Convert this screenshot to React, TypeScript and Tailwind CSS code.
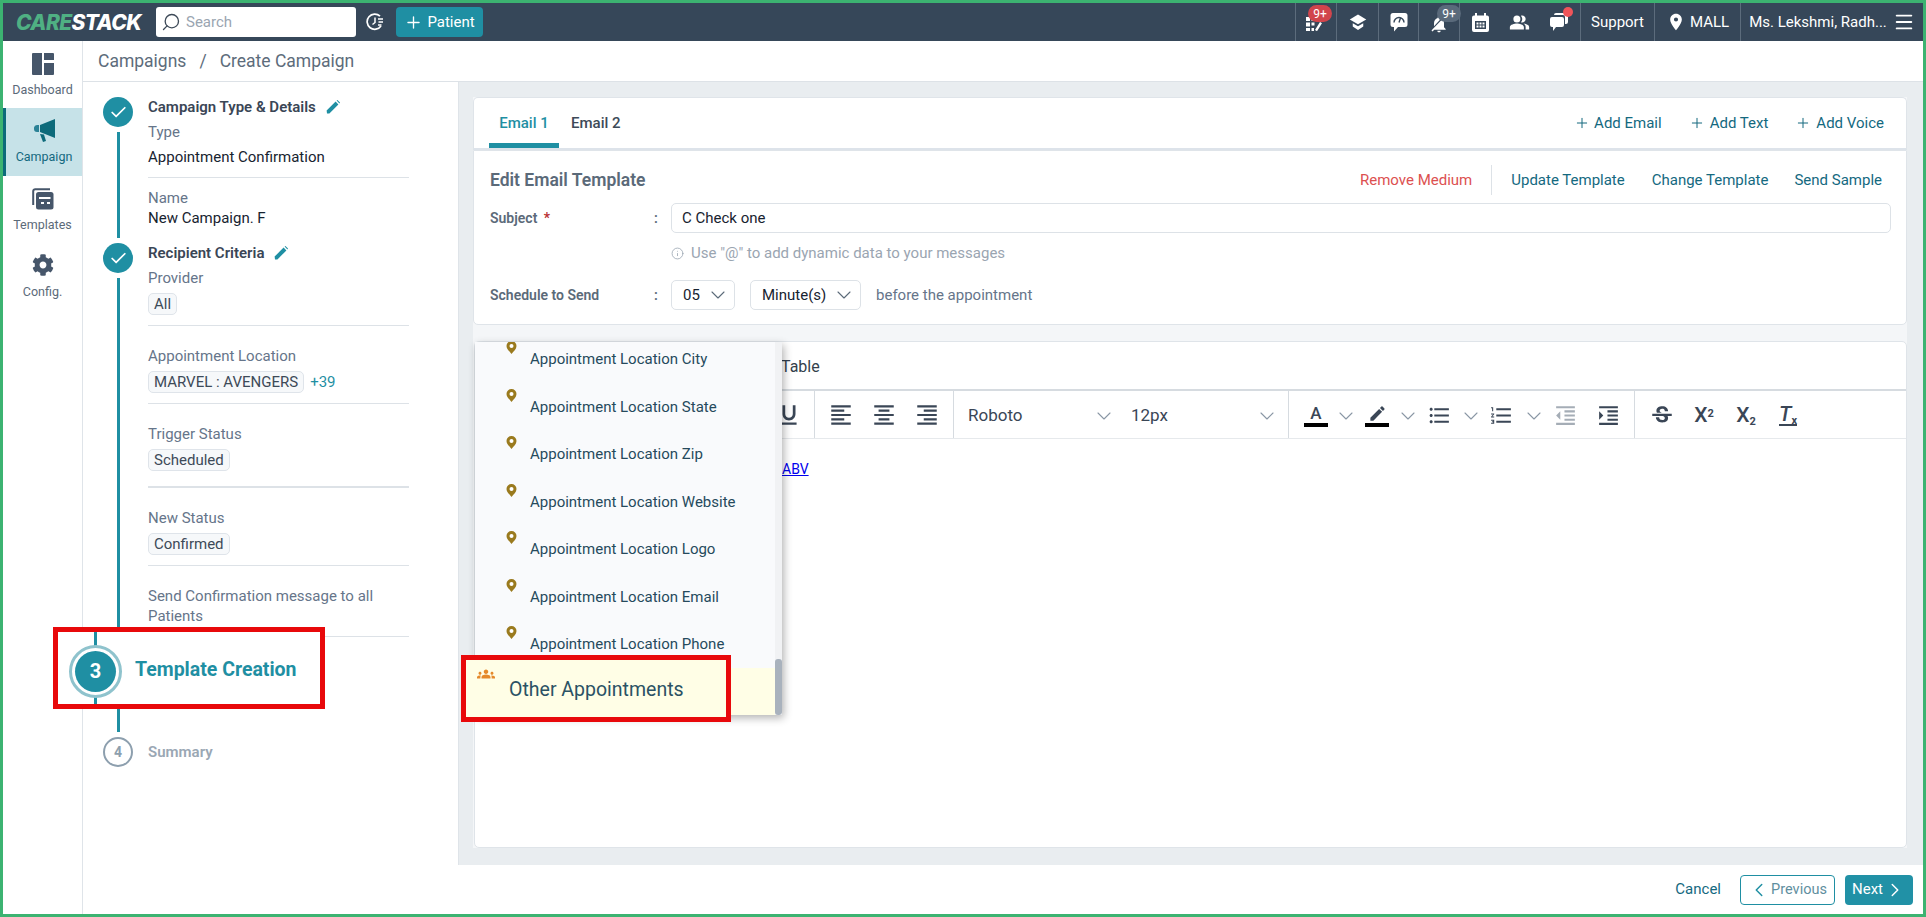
import React from "react";
import { Search, Plus, ChevronDown, ChevronLeft, ChevronRight, Check, Menu, Info } from "lucide-react";
import { FaCog } from "react-icons/fa";
import {
  MdNotificationsOff, MdPeopleAlt, MdLocationOn, MdFormatAlignLeft, MdFormatAlignCenter, MdFormatAlignRight,
  MdFormatListBulleted, MdFormatListNumbered, MdFormatIndentDecrease, MdFormatIndentIncrease, MdStrikethroughS,
  MdFormatUnderlined, MdEdit, MdGroups,
} from "react-icons/md";

const Pencil = () => (
  <svg width="14" height="14" viewBox="0 0 14 14" className="text-[#1f8fa3]">
    <path d="M1 13.5 L0.6 10.6 L9.6 1.6 L12.4 4.4 L3.4 13.4 Z" fill="currentColor" />
    <path d="M10.6 0.6 L11.4 0 L14 2.6 L13.4 3.4 Z" fill="currentColor" />
  </svg>
);

const Chip = ({ children }: { children: React.ReactNode }) => (
  <span className="inline-flex h-[22px] items-center rounded-[5px] border border-[#dfe4ea] bg-[#f6f8fa] px-[5px] text-[15px] text-[#3d4a58]">{children}</span>
);

const Label = ({ children, cls = "" }: { children: React.ReactNode; cls?: string }) => (
  <div className={`text-[15px] leading-[20px] text-[#66758a] ${cls}`}>{children}</div>
);

const Done = () => (
  <div className="flex h-[30px] w-[30px] items-center justify-center rounded-full bg-[#1f8fa3] text-white">
    <Check size={19} strokeWidth={2.2} />
  </div>
);

const TB = ({ children }: { children: React.ReactNode }) => <span className="flex w-[26px] items-center justify-center text-[#3a4656]">{children}</span>;

const Cv = ({ cls = "" }: { cls?: string }) => (
  <span className={`flex w-[15px] shrink-0 justify-center text-[#8a97a5] ${cls}`}>
    <ChevronDown size={24} strokeWidth={1.1} className="shrink-0" />
  </span>
);

const SelectCv = () => (
  <span className="flex w-[16px] shrink-0 justify-center text-[#5b6a79]">
    <ChevronDown size={24} strokeWidth={1.1} className="shrink-0" />
  </span>
);

const pins = ["City", "State", "Zip", "Website", "Logo", "Email", "Phone"];

const HeaderCell = ({ w, children }: { w: string; children: React.ReactNode }) => (
  <div className={`relative flex h-full items-center justify-center border-l border-[#5c6c7c] ${w}`}>{children}</div>
);

export default function App() {
  return (
    <div className="flex h-[917px] w-[1926px] flex-col overflow-hidden border-[3px] border-[#3cb371] bg-white font-[Roboto,sans-serif]">
      {/* top bar */}
      <header className="flex h-[38px] shrink-0 items-center bg-[#364759] text-white">
        <div className="ml-[13px] w-[127px] whitespace-nowrap font-[Inter,sans-serif] text-[21px] font-extrabold italic leading-none tracking-[-0.6px]">
          <span className="text-[#4fb083]">CARE</span><span className="text-white">STACK</span>
        </div>
        <div className="ml-[13px] flex h-[30px] w-[200px] items-center rounded-[3px] bg-white pl-[5px]">
          <Search size={20} strokeWidth={1.6} className="-scale-x-100 text-[#3d4a58]" />
          <span className="ml-[5px] text-[15px] text-[#9aa5b1]">Search</span>
        </div>
        <svg width="18" height="18" viewBox="0 0 18 18" className="ml-[10px]" fill="none" stroke="white" strokeWidth="1.7">
          <path d="M14 3.2A7.6 7.6 0 1 0 15 13" />
          <path d="M9 4.5v5l-2.5 2" strokeWidth="1.5" />
          <path d="M12 6h5M12.5 9h4.5M12 12h3.5" strokeWidth="1.4" />
        </svg>
        <div className="ml-[12px] flex h-[30px] w-[87px] items-center justify-center gap-[4px] rounded-[4px] bg-[#1f8fa3] text-[15px]">
          <Plus size={19} strokeWidth={1.7} /> Patient
        </div>
        <div className="ml-auto flex h-full">
          <HeaderCell w="w-[41px]">
            <svg width="16" height="14" viewBox="0 0 16 14" fill="white" className="mt-[4px] mr-[5px]">
              <path d="M0 0h4v4H0zM5.5 0h4v4h-4zM0 5.5h4v4H0zM5.5 5.5h3v3h-3zM0 11h4v3H0zM5.5 11h2.5v3H5.5zM9 13l5-8 2 1.2-5 8z" />
            </svg>
            <span className="absolute left-[12px] top-[2px] flex h-[17px] w-[24px] items-center justify-center rounded-full bg-[#d1454c] text-[12px] leading-none">9+</span>
          </HeaderCell>
          <HeaderCell w="w-[42px]">
            <svg width="18" height="18" viewBox="0 0 24 24" fill="white">
              <path d="M12 2 23 8.5 12 15 1 8.5Z" />
              <path d="M5 13.5 12 17.5 19 13.5V18L12 22.5 5 18Z" />
            </svg>
          </HeaderCell>
          <HeaderCell w="w-[40px]">
            <svg width="18" height="20" viewBox="0 0 18 20">
              <path d="M3 1h12a2.5 2.5 0 0 1 2.5 2.5v9A2.5 2.5 0 0 1 15 15H8l-4 4.5V15H3A2.5 2.5 0 0 1 .5 12.5v-9A2.5 2.5 0 0 1 3 1Z" fill="white" />
              <path d="M4 12a5 5 0 1 1 10 0" fill="none" stroke="#364759" strokeWidth="1.4" transform="translate(0 -1.5)" />
              <path d="M9 10.5 10.5 6" stroke="#364759" strokeWidth="1.4" />
            </svg>
          </HeaderCell>
          <HeaderCell w="w-[41px]">
            <MdNotificationsOff size={20} className="mt-[4px] -scale-x-100" />
            <span className="absolute left-[18px] top-[2px] flex h-[17px] w-[24px] items-center justify-center rounded-full bg-[#5a6a7b] text-[12px] leading-none">9+</span>
          </HeaderCell>
          <HeaderCell w="w-[121px]">
            <div className="flex w-full items-center justify-around px-[2px]">
              <svg width="17" height="19" viewBox="0 0 17 19" fill="white">
                <path d="M3 0h2v2.5h7V0h2v2.5h1A2 2 0 0 1 17 4.5V17a2 2 0 0 1-2 2H2a2 2 0 0 1-2-2V4.5a2 2 0 0 1 2-2h1Z" />
                <path d="M3 8h11v8H3Z" fill="#364759" />
                <path d="M4.5 9.5h2v2h-2zM7.5 9.5h2v2h-2zM10.5 9.5h2v2h-2zM4.5 12.5h2v2h-2zM7.5 12.5h2v2h-2zM10.5 12.5h2v2h-2z" />
              </svg>
              <MdPeopleAlt size={21} />
              <span className="relative">
                <svg width="18" height="18" viewBox="0 0 18 18" fill="white">
                  <path d="M6 0h10a2 2 0 0 1 2 2v7a2 2 0 0 1-2 2h-1V4a2 2 0 0 0-2-2H4a2 2 0 0 1 2-2Z" />
                  <path d="M2 4h10a2 2 0 0 1 2 2v6a2 2 0 0 1-2 2H6l-3 4v-4H2a2 2 0 0 1-2-2V6a2 2 0 0 1 2-2Z" />
                </svg>
                <span className="absolute -right-[5px] -top-[6px] h-[10px] w-[10px] rounded-full bg-[#f0555a]" />
              </span>
            </div>
          </HeaderCell>
          <HeaderCell w="w-[74px]"><span className="text-[15px]">Support</span></HeaderCell>
          <HeaderCell w="w-[86px]">
            <MdLocationOn size={20} className="mr-[4px]" />
            <span className="text-[15px]">MALL</span>
          </HeaderCell>
          <HeaderCell w="w-[183px]">
            <span className="whitespace-nowrap text-[15px]">Ms. Lekshmi, Radh...</span>
            <Menu size={22} strokeWidth={2} className="ml-[6px]" />
          </HeaderCell>
        </div>
      </header>

      <div className="flex min-h-0 flex-1">
        {/* sidebar */}
        <aside className="w-[80px] shrink-0 border-r border-[#dfe4e9] text-center text-[12.5px] leading-[16px] text-[#5b6a79]">
          <div className="flex h-[67px] flex-col items-center pt-[12px]">
            <svg width="22" height="22" viewBox="0 0 22 22" fill="#46566a">
              <path d="M1 0h9v22H1a1 1 0 0 1-1-1V1a1 1 0 0 1 1-1Z" />
              <path d="M12 0h9a1 1 0 0 1 1 1v6H12Z" />
              <path d="M12 10h10v11a1 1 0 0 1-1 1h-9Z" />
            </svg>
            <span className="mt-[7px]">Dashboard</span>
          </div>
          <div className="flex h-[68px] flex-col items-center border-l-[3px] border-[#0d6a7a] bg-[#c6e2e8] pt-[11px] text-[#14697f]">
            <svg width="23" height="23" viewBox="0 0 23 23">
              <path d="M1 8.5A3 3 0 0 1 4 6h2v7H4a3 3 0 0 1-3-3Z" fill="#2b8296" />
              <path d="M7 6 22 0v19L7 13Z" fill="#0d6a7a" />
              <path d="M7 15 11 15.5 13 22 10 23Z" fill="#0d6a7a" />
            </svg>
            <span className="mt-[7px]">Campaign</span>
          </div>
          <div className="flex h-[68px] flex-col items-center pt-[12px]">
            <svg width="22" height="22" viewBox="0 0 22 22" fill="none">
              <path d="M1.2 17V3.2a2 2 0 0 1 2-2H18" stroke="#46566a" strokeWidth="2" />
              <rect x="4" y="4" width="17.5" height="17.5" rx="2.5" fill="#46566a" />
              <path d="M7 10h11.5M9 15h3M15 15h3" stroke="white" strokeWidth="2" />
            </svg>
            <span className="mt-[7px]">Templates</span>
          </div>
          <div className="flex h-[68px] flex-col items-center pt-[10px]">
            <FaCog size={22} className="text-[#46566a]" />
            <span className="mt-[8px]">Config.</span>
          </div>
        </aside>

        <main className="flex min-w-0 flex-1 flex-col">
          <div className="flex h-[41px] shrink-0 items-center border-b border-[#dde2e7] pl-[15px] text-[17.5px] text-[#5d6c7b]">
            <span>Campaigns</span>
            <span className="mx-[13px]">/</span>
            <span>Create Campaign</span>
          </div>

          <div className="flex min-h-0 flex-1">
            {/* stepper */}
            <section className="relative w-[375px] shrink-0 pl-[20px] pt-[15px]">
              <div className="flex h-[146px] gap-[15px]">
                <div className="flex w-[30px] flex-col items-center">
                  <Done />
                  <div className="my-[5px] w-[3px] flex-1 bg-[#1f8fa3]" />
                </div>
                <div className="w-[261px]">
                  <div className="flex h-[20px] items-center gap-[10px] text-[15px] font-semibold text-[#3a4656]">Campaign Type &amp; Details <Pencil /></div>
                  <Label cls="mt-[5px]">Type</Label>
                  <div className="mt-[5px] text-[15px] leading-[20px] text-[#172330]">Appointment Confirmation</div>
                  <div className="mt-[10px] h-px bg-[#dde2e7]" />
                  <Label cls="mt-[10px]">Name</Label>
                  <div className="text-[15px] leading-[20px] text-[#172330]">New Campaign. F</div>
                </div>
              </div>
              <div className="flex h-[494px] gap-[15px]">
                <div className="flex w-[30px] flex-col items-center">
                  <Done />
                  <div className="my-[5px] w-[3px] flex-1 bg-[#1f8fa3]" />
                </div>
                <div className="w-[261px]">
                  <div className="flex h-[20px] items-center gap-[10px] text-[15px] font-semibold text-[#3a4656]">Recipient Criteria <Pencil /></div>
                  <Label cls="mt-[5px]">Provider</Label>
                  <div className="mt-[5px] flex"><Chip>All</Chip></div>
                  <div className="mt-[10px] h-px bg-[#dde2e7]" />
                  <Label cls="mt-[20px]">Appointment Location</Label>
                  <div className="mt-[5px] flex items-center gap-[6px]"><Chip>MARVEL : AVENGERS</Chip><span className="text-[15px] leading-none text-[#1f8fa3]">+39</span></div>
                  <div className="mt-[10px] h-px bg-[#dde2e7]" />
                  <Label cls="mt-[20px]">Trigger Status</Label>
                  <div className="mt-[5px] flex"><Chip>Scheduled</Chip></div>
                  <div className="mt-[15px] h-[2px] bg-[#dde2e7]" />
                  <Label cls="mt-[20px]">New Status</Label>
                  <div className="mt-[5px] flex"><Chip>Confirmed</Chip></div>
                  <div className="mt-[10px] h-px bg-[#dde2e7]" />
                  <Label cls="mt-[20px]">Send Confirmation message to all Patients</Label>
                  <div className="mt-[10px] h-px bg-[#dde2e7]" />
                </div>
              </div>
              <div className="flex gap-[15px]">
                <div className="flex h-[30px] w-[30px] items-center justify-center rounded-full border-2 border-[#8d9fae] text-[14px] font-bold text-[#8d9fae]">4</div>
                <div className="flex h-[30px] items-center text-[15px] font-semibold text-[#9aa7b4]">Summary</div>
              </div>

              {/* annotation over step 3 */}
              <div className="absolute left-[-30px] top-[545px] flex h-[82px] w-[272px] items-center border-[5px] border-[#e8090b] bg-white">
                <div className="absolute left-[36px] top-0 h-full w-[3px] bg-[#1f8fa3]" />
                <div className="relative ml-[11px] mt-[6px] flex h-[53px] w-[53px] items-center justify-center rounded-full border-[3px] border-[#8fc3cd] bg-white">
                  <div className="flex h-[41px] w-[41px] items-center justify-center rounded-full bg-[#1f8fa3] text-[20px] font-bold text-white">3</div>
                </div>
                <span className="ml-[13px] mt-[4px] text-[19.5px] font-bold text-[#1f8fa3]">Template Creation</span>
              </div>
            </section>

            {/* content */}
            <section className="min-w-0 flex-1 border-l border-[#dfe4e9] bg-[#e9edf0] pl-[14px] pr-[16px] pt-[15px]">
              <div className="flex h-[751px] flex-col bg-[#f4f6f8]">
                <div className="flex h-[53px] shrink-0 items-start rounded-t-[5px] border-x border-t border-[#dfe4e9] border-b-[2px] border-b-[#dde3ea] bg-white pl-[15px]">
                  <div className="flex h-[50px] w-[70px] items-center justify-center border-b-[5px] border-[#1f8fa3] pt-[5px] text-[15px] font-medium text-[#1f8fa3]">Email 1</div>
                  <div className="ml-[12px] flex h-[50px] items-center text-[15px] font-medium text-[#3d4a58]">Email 2</div>
                  <div className="ml-auto mr-[22px] flex h-[50px] items-center text-[15px] text-[#14697f]">
                    <Plus size={16} strokeWidth={1.5} /><span className="ml-[4px]">Add Email</span>
                    <Plus size={16} strokeWidth={1.5} className="ml-[27px]" /><span className="ml-[5px]">Add Text</span>
                    <Plus size={16} strokeWidth={1.5} className="ml-[27px]" /><span className="ml-[5px]">Add Voice</span>
                  </div>
                </div>
                <div className="h-[175px] shrink-0 rounded-b-[5px] border border-[#dfe4e9] bg-white pl-[16px] pr-[15px]">
                  <div className="flex h-[52px] items-center pr-[9px] pt-[6px]">
                    <span className="text-[17.5px] font-semibold text-[#5b6a79]">Edit Email Template</span>
                    <span className="ml-auto text-[15px] text-[#dc5050]">Remove Medium</span>
                    <span className="mx-[19px] h-[30px] w-px bg-[#dde2e7]" />
                    <span className="text-[15px] text-[#14697f]">Update Template</span>
                    <span className="ml-[27px] text-[15px] text-[#14697f]">Change Template</span>
                    <span className="ml-[26px] text-[15px] text-[#14697f]">Send Sample</span>
                  </div>
                  <div className="flex h-[30px] items-center text-[14px] font-semibold text-[#5b6a79]">
                    <span className="w-[164px]">Subject <span className="ml-[3px] text-[#b83232]">*</span></span>
                    <span className="w-[17px]">:</span>
                    <div className="flex h-[30px] flex-1 items-center rounded-[5px] border border-[#dde2e7] pl-[10px] text-[15px] font-normal text-[#172330]">C Check one</div>
                  </div>
                  <div className="ml-[181px] mt-[10px] flex h-[20px] items-center gap-[7px] text-[15px] text-[#9aa5b1]">
                    <Info size={13} strokeWidth={1.5} /> Use "@" to add dynamic data to your messages
                  </div>
                  <div className="mt-[17px] flex h-[30px] items-center text-[14px] font-semibold text-[#5b6a79]">
                    <span className="w-[164px]">Schedule to Send</span>
                    <span className="w-[17px]">:</span>
                    <div className="flex h-[30px] w-[64px] items-center justify-between rounded-[5px] border border-[#dde2e7] pl-[11px] pr-[8px] text-[15px] font-normal text-[#172330]">05 <SelectCv /></div>
                    <div className="ml-[15px] flex h-[30px] w-[111px] items-center justify-between rounded-[5px] border border-[#dde2e7] pl-[11px] pr-[8px] text-[15px] font-normal text-[#172330]">Minute(s) <SelectCv /></div>
                    <span className="ml-[15px] text-[15px] font-normal text-[#66758a]">before the appointment</span>
                  </div>
                </div>

                {/* editor */}
                <div className="relative mt-[16px] ml-px flex h-[507px] flex-col rounded-[5px] border border-[#dfe4e9] bg-white">
                  <div className="flex h-[49px] shrink-0 items-center border-b-2 border-[#d6dbe0] pl-[306px] pt-[2px] text-[16px] text-[#333f4c]">Table</div>
                  <div className="flex h-[48px] shrink-0 items-center border-b border-[#e6e9ec]">
                    <div className="flex h-full w-[340px] items-center justify-end border-r border-[#d6dbe0] pr-[12px] text-[#3a4656]"><MdFormatUnderlined size={26} /></div>
                    <div className="flex h-full w-[139px] items-center gap-[17px] border-r border-[#d6dbe0] pl-[13px]">
                      <TB><MdFormatAlignLeft size={26} /></TB><TB><MdFormatAlignCenter size={26} /></TB><TB><MdFormatAlignRight size={26} /></TB>
                    </div>
                    <div className="flex h-full w-[335px] items-center border-r border-[#d6dbe0] pl-[14px] pt-[2px] text-[17px] text-[#3a4656]">
                      <span className="w-[128px]">Roboto</span>
                      <Cv />
                      <span className="ml-[20px] w-[128px]">12px</span>
                      <Cv />
                    </div>
                    <div className="flex h-full w-[346px] items-center border-r border-[#d6dbe0] pl-[15px] pt-[2px] text-[#3a4656]">
                      <span className="flex w-[24px] flex-col items-center">
                        <span className="text-[17px] font-medium leading-[17px] text-[#3a4656]">A</span>
                        <span className="mt-[1px] h-[4px] w-[24px] bg-black" />
                      </span>
                      <Cv cls="ml-[10px]" />
                      <span className="ml-[12px] flex w-[24px] flex-col items-center">
                        <MdEdit size={19} />
                        <span className="h-[4px] w-[24px] bg-black" />
                      </span>
                      <Cv cls="ml-[11px]" />
                      <MdFormatListBulleted size={25} className="ml-[12px]" />
                      <Cv cls="ml-[11px]" />
                      <MdFormatListNumbered size={25} className="ml-[11px]" />
                      <Cv cls="ml-[12px]" />
                      <MdFormatIndentDecrease size={25} className="ml-[12px] text-[#a5adb6]" />
                      <MdFormatIndentIncrease size={25} className="ml-[18px]" />
                    </div>
                    <div className="flex h-full flex-1 items-center gap-[16px] pl-[14px] pt-[2px] text-[#3a4656]">
                      <TB><MdStrikethroughS size={26} /></TB>
                      <TB><span className="text-[21px] font-medium leading-none">X<sup className="text-[11px] font-bold">2</sup></span></TB>
                      <TB><span className="text-[21px] font-medium leading-none">X<sub className="text-[11px] font-bold">2</sub></span></TB>
                      <TB><span className="border-b-2 border-[#3a4656] text-[21px] font-medium italic leading-[19px]">T<sub className="text-[11px] font-bold not-italic">x</sub></span></TB>
                    </div>
                  </div>
                  <div className="pl-[307px] pt-[20px] text-[14px] leading-[20px]"><span className="text-[#0000ee] underline">ABV</span></div>

                  {/* merge-field dropdown */}
                  <div className="absolute left-0 top-0 flex h-[373px] w-[307px] overflow-hidden rounded-b-[2px] bg-[#f9fafc] shadow-[2px_3px_8px_rgba(0,0,0,0.3)]">
                    <div className="flex min-w-0 flex-1 flex-col">
                      <div className="-mt-px min-h-0 flex-1 overflow-hidden">
                        {pins.map((p) => (
                          <div key={p} className="flex h-[47.5px] pl-[31px]">
                            <svg width="11" height="13" viewBox="0 0 11 13" className="shrink-0">
                              <path d="M5.5 0A5 5 0 0 1 10.5 5C10.5 8 7.5 10.5 5.5 13 3.5 10.5.5 8 .5 5A5 5 0 0 1 5.5 0Z" fill="#9a7a1e" />
                              <circle cx="5.5" cy="5" r="2" fill="white" />
                            </svg>
                            <span className="ml-[13px] mt-[8px] text-[15px] leading-[20px] text-[#264a5c]">Appointment Location {p}</span>
                          </div>
                        ))}
                      </div>
                      <div className="h-[47px] shrink-0 bg-[#fffee6]" />
                    </div>
                    <div className="flex w-[7px] shrink-0 flex-col justify-end bg-[#f1f2f4]">
                      <div className="h-[56px] rounded-[3px] bg-[#a9b2bd]" />
                    </div>
                  </div>
                  {/* annotation over the selected group */}
                  <div className="absolute left-[-14px] top-[313px] flex h-[67px] w-[270px] border-[5px] border-[#e8090b] bg-[#fffee6]">
                    <MdGroups size={18} className="ml-[11px] mt-[5px] text-[#e5892a]" />
                    <span className="ml-[14px] mt-[18px] text-[19.5px] leading-[24px] text-[#2b5264]">Other Appointments</span>
                  </div>
                </div>
              </div>
            </section>
          </div>

          <footer className="flex h-[49px] shrink-0 items-center justify-end pr-[10px]">
            <span className="text-[15px] text-[#14697f]">Cancel</span>
            <div className="ml-[19px] flex h-[30px] w-[95px] items-center justify-center gap-[1px] rounded-[4px] border border-[#1f8fa3] text-[14.5px] text-[#5f8fa0]">
              <ChevronLeft size={22} strokeWidth={1.6} className="text-[#1f8fa3]" /> Previous
            </div>
            <div className="ml-[10px] flex h-[30px] w-[68px] items-center justify-center gap-[1px] rounded-[4px] bg-[#2191a6] text-[15px] text-white">
              Next <ChevronRight size={22} strokeWidth={1.6} />
            </div>
          </footer>
        </main>
      </div>
    </div>
  );
}
